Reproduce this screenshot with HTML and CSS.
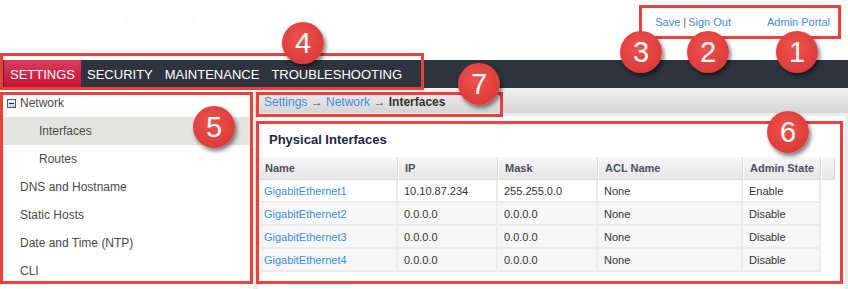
FILE: index.html
```html
<!DOCTYPE html>
<html>
<head>
<meta charset="utf-8">
<link rel="stylesheet" href="styles.css">
</head>
<body>
<div class="page">
  <header class="top">
    <span class="ghost">Administrator</span>
    <div class="links">
      <a class="link">Save</a><span class="sep">|</span><a class="link">Sign Out</a>
      <a class="link portal">Admin Portal</a>
    </div>
  </header>
  <nav class="nav">
    <span class="nav-item active">SETTINGS</span>
    <span class="nav-item">SECURITY</span>
    <span class="nav-item">MAINTENANCE</span>
    <span class="nav-item">TROUBLESHOOTING</span>
  </nav>
  <div class="content">
    <aside class="sidebar">
      <div class="side-item group"><span class="minus"></span>Network</div>
      <div class="side-item sub active">Interfaces</div>
      <div class="side-item sub">Routes</div>
      <div class="side-item">DNS and Hostname</div>
      <div class="side-item">Static Hosts</div>
      <div class="side-item">Date and Time (NTP)</div>
      <div class="side-item">CLI</div>
    </aside>
    <main class="main">
      <div class="crumb"><a class="link">Settings</a> → <a class="link">Network</a> → <b>Interfaces</b></div>
      <section class="panel">
        <h2 class="title">Physical Interfaces</h2>
        <table class="grid">
          <thead>
            <tr><th class="c1">Name</th><th class="c2">IP</th><th class="c3">Mask</th><th class="c4">ACL Name</th><th class="c5">Admin State</th><th class="c6"></th></tr>
          </thead>
          <tbody>
            <tr><td><a class="link">GigabitEthernet1</a></td><td>10.10.87.234</td><td>255.255.0.0</td><td>None</td><td>Enable</td><td class="pad"></td></tr>
            <tr class="alt"><td><a class="link">GigabitEthernet2</a></td><td>0.0.0.0</td><td>0.0.0.0</td><td>None</td><td>Disable</td><td class="pad"></td></tr>
            <tr class="alt"><td><a class="link">GigabitEthernet3</a></td><td>0.0.0.0</td><td>0.0.0.0</td><td>None</td><td>Disable</td><td class="pad"></td></tr>
            <tr class="alt"><td><a class="link">GigabitEthernet4</a></td><td>0.0.0.0</td><td>0.0.0.0</td><td>None</td><td>Disable</td><td class="pad"></td></tr>
          </tbody>
        </table>
      </section>
    </main>
  </div>

  <div class="frame f-top"></div>
  <div class="frame f4"></div>
  <div class="frame f5"></div>
  <div class="frame f7"></div>
  <div class="frame f6"></div>

  <div class="badge b1">1</div>
  <div class="badge b2">2</div>
  <div class="badge b3">3</div>
  <div class="badge b4">4</div>
  <div class="badge b5">5</div>
  <div class="badge b6">6</div>
  <div class="badge b7">7</div>
</div>
</body>
</html>
```
FILE: styles.css
```css
html, body {
  margin: 0;
  padding: 0;
  background: #ffffff;
}
body {
  font-family: "Liberation Sans", Arial, sans-serif;
  color: #444;
  overflow: hidden;
}
.page {
  position: relative;
  width: 848px;
  height: 289px;
  overflow: hidden;
}
.top {
  height: 60px;
  box-sizing: border-box;
  display: flex;
  justify-content: space-between;
  align-items: flex-start;
  padding: 16px 18px 0 125px;
}
.ghost {
  font-size: 12px;
  color: #fbfbfb;
  margin-top: -4px;
}
.links {
  display: flex;
  align-items: center;
  font-size: 11px;
  line-height: 13px;
}
.link {
  color: #3d8ddd;
  text-decoration: none;
}
.sep {
  color: #666;
  margin: 0 2px 0 3px;
}
.portal {
  margin-left: 36px;
}
.nav {
  height: 28px;
  background: #2f333d;
  display: flex;
  padding-left: 4px;
}
.nav-item {
  line-height: 29px;
  padding: 0 6px;
  font-size: 13px;
  color: #ffffff;
}
.nav-item.active {
  background: linear-gradient(#d83d5e, #c8102e);
}
.content {
  display: flex;
  height: 201px;
}
.sidebar {
  width: 253px;
  flex: none;
  padding-top: 1px;
  box-sizing: border-box;
}
.side-item {
  height: 28px;
  line-height: 28px;
  font-size: 12px;
  color: #4a4a4a;
  padding-left: 20px;
  margin-right: 3px;
}
.side-item.sub {
  padding-left: 39px;
}
.side-item.active {
  background: #e4e4e2;
}
.side-item.group {
  display: flex;
  align-items: center;
  padding-left: 7px;
}
.minus {
  width: 7px;
  height: 7px;
  border: 1px solid #4c5d78;
  background: linear-gradient(#eef2f7, #c9d2de);
  margin-right: 4px;
  position: relative;
}
.minus::after {
  content: "";
  position: absolute;
  left: 1px;
  top: 3px;
  width: 5px;
  height: 1px;
  background: #1e2a40;
}
.main {
  flex: 1;
  background: #ededed;
  padding-left: 2px;
  display: flex;
  flex-direction: column;
}
.crumb {
  height: 25px;
  box-sizing: border-box;
  padding-top: 3px;
  line-height: 22px;
  background: linear-gradient(#f2f2f2, #d5d5d5);
  padding-left: 9px;
  font-size: 12px;
  color: #555;
}
.crumb b {
  color: #333;
}
.panel {
  flex: 1;
  margin: 3px 3px 0 3px;
  background: #ffffff;
}
.title {
  margin: 0;
  padding: 14px 0 0 11px;
  height: 41px;
  box-sizing: border-box;
  line-height: 20px;
  font-size: 13px;
  font-weight: bold;
  color: #25253f;
}
.grid {
  border-collapse: separate;
  border-spacing: 0;
  font-size: 11px;
  table-layout: fixed;
  width: 576px;
}
.grid th {
  height: 23px;
  box-sizing: border-box;
  text-align: left;
  font-weight: bold;
  color: #4d5060;
  padding: 0 6px;
  white-space: nowrap;
  background: linear-gradient(#f8f8f8, #e6e6e6);
  border-right: 1px solid #d8d8d8;
  border-left: 1px solid #ffffff;
  border-bottom: 1px solid #dcdcdc;
}
.grid td {
  height: 23px;
  box-sizing: border-box;
  padding: 0 6px;
  color: #333;
  border-right: 2px solid #ececec;
  border-bottom: 2px solid #ececec;
  white-space: nowrap;
}
.grid tr.alt td {
  background: #f7f7f7;
}
.grid td.pad {
  background: #ffffff !important;
  border: none;
}
.c1 { width: 140px; }
.c2 { width: 100px; }
.c3 { width: 100px; }
.c4 { width: 145px; }
.c5 { width: 78px; }
.c6 { width: 13px; }

.frame {
  position: absolute;
  border: 3px solid #e8423f;
  box-sizing: border-box;
}
.f-top { left: 639px; top: 5px; width: 202px; height: 34px; }
.f4 { left: 0; top: 53px; width: 424px; height: 37px; }
.f5 { left: 0; top: 92px; width: 253px; height: 192px; }
.f7 { left: 256px; top: 92px; width: 247px; height: 25px; }
.f6 { left: 256px; top: 121px; width: 587px; height: 163px; }

.badge {
  position: absolute;
  width: 42px;
  height: 42px;
  margin: -21px 0 0 -21px;
  border-radius: 50%;
  background: radial-gradient(circle at 45% 40%, #ee524f, #dc3b38 75%);
  box-shadow: 2px 3px 4px rgba(0, 0, 0, 0.5);
  color: #ffffff;
  font-size: 29px;
  line-height: 42px;
  text-align: center;
}
.b1 { left: 797px; top: 52px; }
.b2 { left: 708px; top: 52px; }
.b3 { left: 641px; top: 52px; }
.b4 { left: 303px; top: 43px; }
.b5 { left: 214px; top: 127px; }
.b6 { left: 788px; top: 132px; }
.b7 { left: 479px; top: 84px; }
```
